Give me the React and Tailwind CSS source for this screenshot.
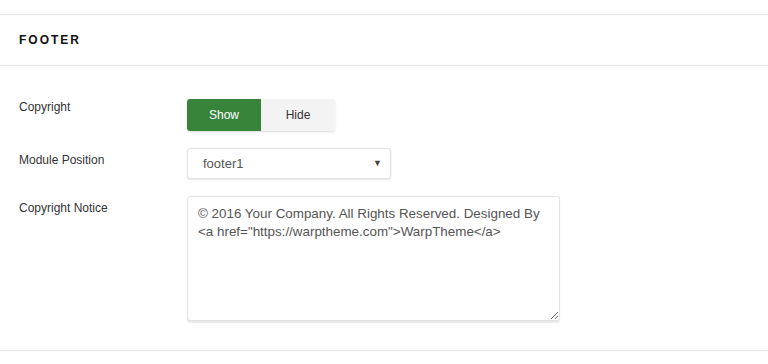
import React from "react";

export default function App() {
  return (
    <div className="w-[768px] h-[364px] overflow-hidden bg-white text-[#333]" style={{ fontFamily: '"Liberation Sans", Arial, sans-serif' }}>
      <div className="h-[14px]" />
      <div className="h-[52px] border-t border-b border-[#e6e6e6] flex items-center px-[19px]">
        <span className="text-[12px] font-bold tracking-[2px] text-[#111] leading-none">FOOTER</span>
      </div>
      <div className="pt-[33px] pb-[29px] border-b border-[#e6e6e6] px-[19px] flex flex-col gap-[17px]">
        <div className="flex">
          <div className="w-[168px] text-[12px] leading-[15px] pt-[1px]">Copyright</div>
          <div className="flex h-[32px] rounded-[3px] overflow-hidden shadow-[0_1px_2px_rgba(0,0,0,0.15)]">
            <button className="w-[74px] bg-[#37833a] text-white text-[12px]">Show</button>
            <button className="w-[74px] bg-[#f3f3f3] text-[#333] text-[12px]">Hide</button>
          </div>
        </div>
        <div className="flex">
          <div className="w-[168px] text-[12px] leading-[15px] pt-[5px]">Module Position</div>
          <div className="w-[204px] h-[31px] rounded-[3px] border border-[#e2e2e2] shadow-[0_1px_2px_rgba(0,0,0,0.1)] bg-white flex items-center justify-between pl-[15px] pr-[8px]">
            <span className="text-[13px] text-[#555]">footer1</span>
            <span className="text-[9px] text-[#444]">▼</span>
          </div>
        </div>
        <div className="flex">
          <div className="w-[168px] text-[12px] leading-[15px] pt-[5px]">Copyright Notice</div>
          <textarea
            className="w-[373px] h-[125px] rounded-[3px] border border-[#e2e2e2] shadow-[0_2px_1px_rgba(0,0,0,0.08)] bg-white px-[10px] pt-[8px] text-[13.4px] leading-[18px] text-[#555] resize-y outline-none"
            style={{ fontFamily: '"Liberation Sans", Arial, sans-serif' }}
            defaultValue={'© 2016 Your Company. All Rights Reserved. Designed By <a href="https://warptheme.com">WarpTheme</a>'}
          />
        </div>
      </div>
    </div>
  );
}
